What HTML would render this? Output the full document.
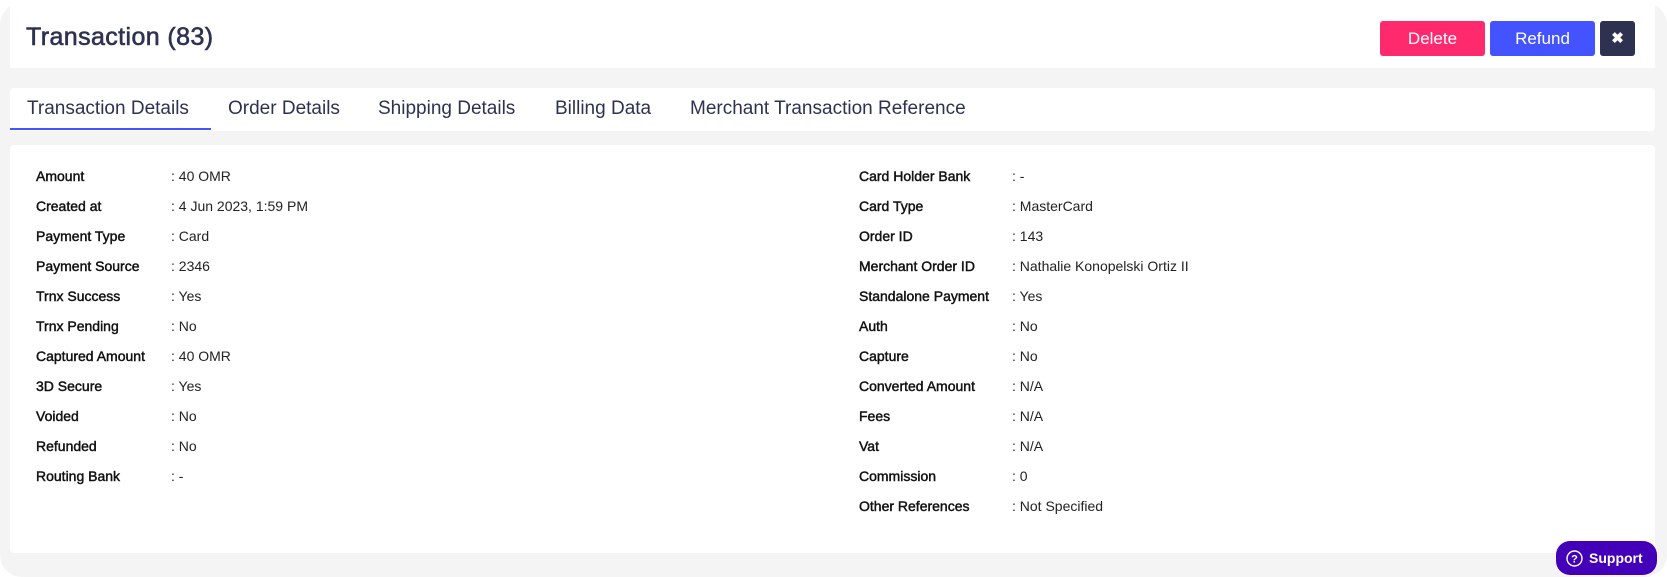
<!DOCTYPE html>
<html><head><meta charset="utf-8"><style>
*{box-sizing:border-box;margin:0;padding:0}
body{width:1667px;height:577px;background:#fff;font-family:"Liberation Sans",sans-serif;position:relative;overflow:hidden}
.outer{position:absolute;left:0;top:3px;width:1667px;height:574px;background:#f4f4f4;border-radius:22px}
.card{position:absolute;background:#fff;border-radius:4px}
.hdr{left:10px;top:3px;width:1645px;height:65px;border-radius:0}
.title{position:absolute;left:16px;top:20px;font-size:25px;color:#2e3250;-webkit-text-stroke:0.6px #2e3250;letter-spacing:0.4px}
.btn{position:absolute;top:18px;height:35px;border-radius:3px;color:#fff;font-size:17px;text-align:center;line-height:35px}
.tabs{left:10px;top:88px;width:1645px;height:43px}
.tab{position:absolute;top:10px;font-size:19px;color:#2e3250}
.ul{position:absolute;left:0;top:40px;width:201px;height:2px;background:#4353ff}
.content{left:10px;top:145px;width:1645px;height:408px}
.r{position:absolute;font-size:14px;color:#222;white-space:nowrap}
.l{color:#111;-webkit-text-stroke:0.45px #111}
.sup{position:absolute;left:1556px;top:541px;width:101px;height:34px;background:#4300b8;border-radius:14px;color:#fff;font-weight:bold;font-size:14px;line-height:34px;padding-left:33px}
</style></head><body>
<div class="outer"></div>
<div class="card hdr"><div class="title">Transaction (83)</div>
<div class="btn" style="left:1370px;width:105px;background:#ff2a6d">Delete</div>
<div class="btn" style="left:1480px;width:105px;background:#4353ff">Refund</div>
<div class="btn" style="left:1590px;width:35px;background:#2e3250;font-weight:bold;font-size:15px">✖</div>
</div>
<div class="card tabs">
<div class="tab" style="left:17px">Transaction Details</div>
<div class="tab" style="left:218px">Order Details</div>
<div class="tab" style="left:368px">Shipping Details</div>
<div class="tab" style="left:545px">Billing Data</div>
<div class="tab" style="left:680px">Merchant Transaction Reference</div>
<div class="ul"></div>
</div>
<div class="card content"></div>
<div class="sup"><svg style="position:absolute;left:10px;top:9px" width="17" height="17" viewBox="0 0 17 17"><circle cx="8.5" cy="8.5" r="7.5" fill="none" stroke="#fff" stroke-width="1.4"/><text x="8.5" y="12.5" font-size="11" font-weight="bold" fill="#fff" text-anchor="middle" font-family="Liberation Sans">?</text></svg>Support</div>
<div>
<div class="r l" style="left:36px;top:168px">Amount</div><div class="r" style="left:171px;top:168px">: 40 OMR</div>
<div class="r l" style="left:36px;top:198px">Created at</div><div class="r" style="left:171px;top:198px">: 4 Jun 2023, 1:59 PM</div>
<div class="r l" style="left:36px;top:228px">Payment Type</div><div class="r" style="left:171px;top:228px">: Card</div>
<div class="r l" style="left:36px;top:258px">Payment Source</div><div class="r" style="left:171px;top:258px">: 2346</div>
<div class="r l" style="left:36px;top:288px">Trnx Success</div><div class="r" style="left:171px;top:288px">: Yes</div>
<div class="r l" style="left:36px;top:318px">Trnx Pending</div><div class="r" style="left:171px;top:318px">: No</div>
<div class="r l" style="left:36px;top:348px">Captured Amount</div><div class="r" style="left:171px;top:348px">: 40 OMR</div>
<div class="r l" style="left:36px;top:378px">3D Secure</div><div class="r" style="left:171px;top:378px">: Yes</div>
<div class="r l" style="left:36px;top:408px">Voided</div><div class="r" style="left:171px;top:408px">: No</div>
<div class="r l" style="left:36px;top:438px">Refunded</div><div class="r" style="left:171px;top:438px">: No</div>
<div class="r l" style="left:36px;top:468px">Routing Bank</div><div class="r" style="left:171px;top:468px">: -</div>
<div class="r l" style="left:859px;top:168px">Card Holder Bank</div><div class="r" style="left:1012px;top:168px">: -</div>
<div class="r l" style="left:859px;top:198px">Card Type</div><div class="r" style="left:1012px;top:198px">: MasterCard</div>
<div class="r l" style="left:859px;top:228px">Order ID</div><div class="r" style="left:1012px;top:228px">: 143</div>
<div class="r l" style="left:859px;top:258px">Merchant Order ID</div><div class="r" style="left:1012px;top:258px">: Nathalie Konopelski Ortiz II</div>
<div class="r l" style="left:859px;top:288px">Standalone Payment</div><div class="r" style="left:1012px;top:288px">: Yes</div>
<div class="r l" style="left:859px;top:318px">Auth</div><div class="r" style="left:1012px;top:318px">: No</div>
<div class="r l" style="left:859px;top:348px">Capture</div><div class="r" style="left:1012px;top:348px">: No</div>
<div class="r l" style="left:859px;top:378px">Converted Amount</div><div class="r" style="left:1012px;top:378px">: N/A</div>
<div class="r l" style="left:859px;top:408px">Fees</div><div class="r" style="left:1012px;top:408px">: N/A</div>
<div class="r l" style="left:859px;top:438px">Vat</div><div class="r" style="left:1012px;top:438px">: N/A</div>
<div class="r l" style="left:859px;top:468px">Commission</div><div class="r" style="left:1012px;top:468px">: 0</div>
<div class="r l" style="left:859px;top:498px">Other References</div><div class="r" style="left:1012px;top:498px">: Not Specified</div>
</div>
</body></html>
